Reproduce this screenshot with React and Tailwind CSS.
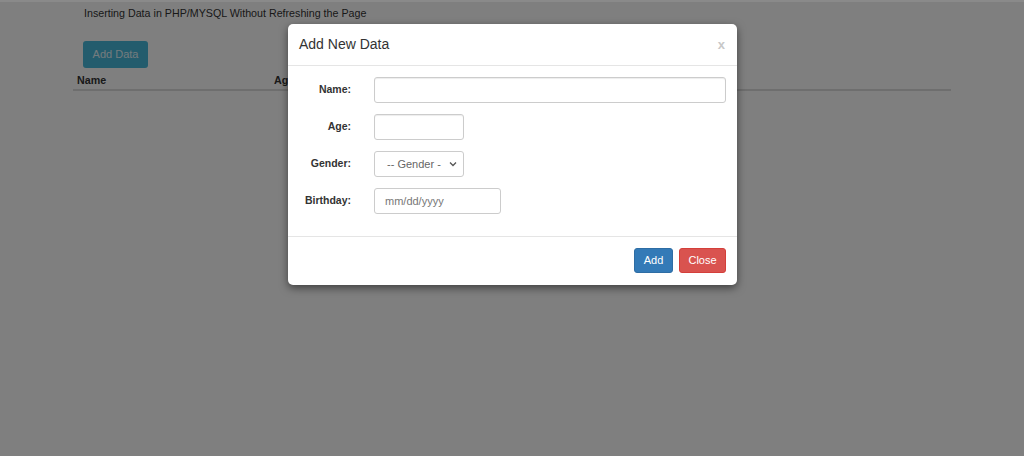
import React from "react";

const font = { fontFamily: '"Liberation Sans", Arial, sans-serif' };

const FormRow = ({ label, children }) => (
  <div className="flex items-center h-[26px] mb-[11px] last:mb-0">
    <label className="w-[52px] text-right text-[10.5px] font-bold text-[#333] whitespace-nowrap">
      {label}
    </label>
    <div className="ml-[23px] flex-1 flex">{children}</div>
  </div>
);

const App = () => {
  return (
    <div className="relative w-[1024px] h-[456px] bg-white overflow-hidden" style={font}>
      {/* page behind the modal */}
      <div className="mx-[73px] pt-[6px]">
        <p className="pl-[11px] text-[10.7px] text-[#333] leading-[14px]">
          Inserting Data in PHP/MYSQL Without Refreshing the Page
        </p>
        <button className="ml-[10px] mt-[21px] h-[27px] w-[65px] rounded-[3px] bg-[#46b8da] text-[11px] text-[#e6f7fc]">
          Add Data
        </button>
        <div className="mt-[4px] flex border-b-2 border-[#ddd] pb-[1px] text-[10.7px] font-bold text-[#333]">
          <span className="pl-[4px] w-[201px]">Name</span>
          <span>Age</span>
        </div>
      </div>

      {/* backdrop */}
      <div className="absolute inset-0 bg-black/50 border-t-2 border-[#8a8a8a]">
        <div className="absolute left-[288px] top-[22px] w-[449px] rounded-[5px] bg-white shadow-[0_3px_9px_rgba(0,0,0,0.5)]">
          <div className="flex items-center justify-between h-[42px] px-[11px] border-b border-[#e5e5e5]">
            <h4 className="text-[14px] text-[#333]">Add New Data</h4>
            <span className="text-[13px] font-bold text-[#c8c8c8] mr-[1px]">x</span>
          </div>
          <div className="px-[11px] pt-[11px] pb-[22px]">
            <FormRow label="Name:">
              <input className="w-full h-[26px] rounded-[3px] border border-[#ccc] shadow-[inset_0_1px_1px_rgba(0,0,0,0.075)]" />
            </FormRow>
            <FormRow label="Age:">
              <input className="w-[90px] h-[26px] rounded-[3px] border border-[#ccc] shadow-[inset_0_1px_1px_rgba(0,0,0,0.075)]" />
            </FormRow>
            <FormRow label="Gender:">
              <div className="w-[90px] h-[26px] rounded-[3px] border border-[#ccc] flex items-center justify-between pl-[12px] pr-[6px] text-[11px] text-[#666]">
                <span>-- Gender -</span>
                <svg width="8" height="6" viewBox="0 0 8 6" fill="none">
                  <path d="M1 1.5 L4 4.5 L7 1.5" stroke="#555" strokeWidth="1.3" />
                </svg>
              </div>
            </FormRow>
            <FormRow label="Birthday:">
              <div className="w-[127px] h-[26px] rounded-[3px] border border-[#ccc] flex items-center pl-[10px] text-[11px] text-[#777]">
                mm/dd/yyyy
              </div>
            </FormRow>
          </div>
          <div className="flex justify-end gap-[6px] px-[11px] pt-[11px] pb-[12px] border-t border-[#e5e5e5]">
            <button className="h-[25px] w-[39px] rounded-[3px] bg-[#337ab7] border border-[#2e6da4] text-[11px] text-white">
              Add
            </button>
            <button className="h-[25px] w-[47px] rounded-[3px] bg-[#d9534f] border border-[#d43f3a] text-[11px] text-white">
              Close
            </button>
          </div>
        </div>
      </div>
    </div>
  );
};

export default App;
